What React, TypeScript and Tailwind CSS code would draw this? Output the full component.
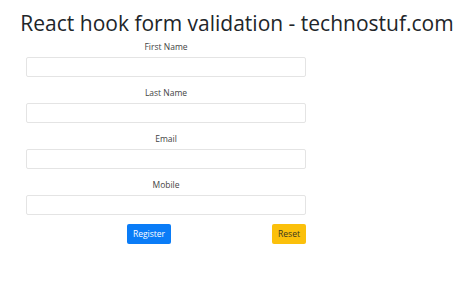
import React from "react";

const fields = ["First Name", "Last Name", "Email", "Mobile"];

export default function App() {
  return (
    <div
      className="w-[474px] h-[284px] bg-white overflow-hidden"
      style={{ fontFamily: '"Open Sans", "Noto Sans", sans-serif' }}
    >
      <h1 className="pt-[9px] text-center text-[21px] leading-[28px] text-[#212529] font-medium">
        React hook form validation - technostuf.com
      </h1>
      <form className="ml-[26px] w-[280px] flex flex-col">
        {fields.map((f) => (
          <div key={f} className="flex flex-col h-[46px]">
            <label className="h-[20px] flex items-center justify-center text-[8.5px] text-[#444]">
              {f}
            </label>
            <input
              type="text"
              className="h-[20px] w-full border border-[#e4e4e4] rounded-[2px] bg-white outline-none"
            />
          </div>
        ))}
        <div className="flex justify-between items-center pl-[101px] mt-[3px]">
          <button
            type="button"
            className="w-[44px] h-[20px] rounded-[2px] bg-[#0a7cf7] text-white text-[8.5px] flex items-center justify-center"
          >
            Register
          </button>
          <button
            type="button"
            className="w-[34px] h-[20px] rounded-[2px] bg-[#fbc00b] text-[#3a3420] text-[8.5px] flex items-center justify-center"
          >
            Reset
          </button>
        </div>
      </form>
    </div>
  );
}
